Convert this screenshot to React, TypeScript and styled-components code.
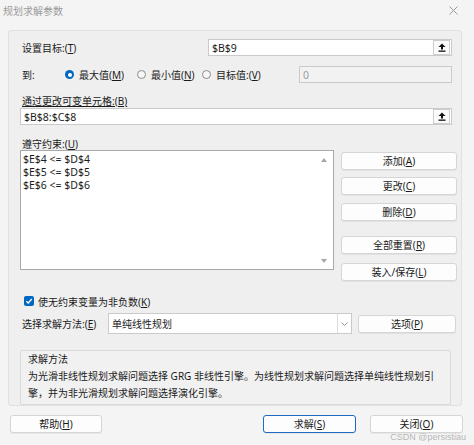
import React from 'react';
import styled, { createGlobalStyle } from 'styled-components';

const Global = createGlobalStyle`
  html, body { margin: 0; padding: 0; background: #f4f4f4; }
  body {
    font-family: "Noto Sans", "Noto Sans CJK SC", sans-serif;
    font-size: 10px;
    color: #1b1b1b;
  }
  * { box-sizing: border-box; }
`;

const Window = styled.div`
  position: relative;
  width: 474px;
  height: 445px;
  background: #f4f4f4;
  overflow: hidden;
`;

const TitleBar = styled.div`
  height: 21px;
  display: flex;
  align-items: center;
  justify-content: space-between;
  padding: 0 16px 0 3px;
  color: #9a9a9a;
  font-size: 10px;
`;

const Panel = styled.div`
  margin: 9px 0 0 8px;
  width: 454px;
  height: 376px;
  border: 1px solid #e1e1e1;
  border-radius: 3px;
  background: #efefef;
  padding-left: 11px;
  display: flex;
  flex-direction: column;
`;

const Row = styled.div<{ $mt: number; $h: number }>`
  display: flex;
  align-items: center;
  margin-top: ${p => p.$mt}px;
  height: ${p => p.$h}px;
`;

const Label = styled.span<{ $w?: number }>`
  flex: none;
  width: ${p => (p.$w ? `${p.$w}px` : 'auto')};
  padding-left: 2px;
  line-height: 12px;
  white-space: nowrap;
`;

const Caption = styled.div<{ $mt: number; $under?: boolean }>`
  margin-top: ${p => p.$mt}px;
  height: 12px;
  line-height: 12px;
  padding-left: 2px;
  white-space: nowrap;
  text-decoration: ${p => (p.$under ? 'underline' : 'none')};
`;

const Key = styled.span`
  text-decoration: underline;
`;

const Field = styled.div<{ $w: number; $disabled?: boolean; $mt?: number }>`
  flex: none;
  width: ${p => p.$w}px;
  height: 17px;
  margin-top: ${p => p.$mt ?? 0}px;
  display: flex;
  align-items: center;
  padding: 0 1px 0 3px;
  background: ${p => (p.$disabled ? '#f2f2f2' : '#ffffff')};
  border: 1px solid #cacaca;
  color: ${p => (p.$disabled ? '#9c9c9c' : '#1b1b1b')};
  font-size: 10.5px;
  white-space: nowrap;
`;

const PickButton = styled.div`
  margin-left: auto;
  width: 17px;
  height: 15px;
  border: 1px solid #cdcdcd;
  background: #fbfbfb;
  display: flex;
  align-items: center;
  justify-content: center;
`;

const RadioItem = styled.label<{ $w: number }>`
  flex: none;
  width: ${p => p.$w}px;
  display: flex;
  align-items: center;
  gap: 5px;
  white-space: nowrap;
`;

const RadioDot = styled.span<{ $on?: boolean }>`
  flex: none;
  width: 9px;
  height: 9px;
  border-radius: 50%;
  border: ${p => (p.$on ? 'none' : '1px solid #8a8a8a')};
  background: ${p => (p.$on ? '#0067c0' : '#f7f7f7')};
  display: flex;
  align-items: center;
  justify-content: center;
  &::after {
    content: '';
    display: ${p => (p.$on ? 'block' : 'none')};
    width: 4px;
    height: 4px;
    border-radius: 50%;
    background: #ffffff;
  }
`;

const ConstraintArea = styled.div`
  display: flex;
  gap: 7px;
`;

const ListBox = styled.div`
  position: relative;
  width: 314px;
  height: 120px;
  background: #ffffff;
  border: 1px solid #a9a9a9;
  padding: 2px 0 0 2px;
  line-height: 13px;
  font-size: 10.5px;
`;

const ScrollArrow = styled.span<{ $down?: boolean }>`
  position: absolute;
  right: 6px;
  ${p => (p.$down ? 'bottom: 6px;' : 'top: 7px;')}
  width: 0;
  height: 0;
  border-left: 3px solid transparent;
  border-right: 3px solid transparent;
  ${p => (p.$down ? 'border-top: 4px solid #a6a6a6;' : 'border-bottom: 4px solid #a6a6a6;')}
`;

const ButtonColumn = styled.div`
  display: flex;
  flex-direction: column;
  padding-top: 2px;
`;

const Btn = styled.button<{ $w: number; $mt?: number; $ml?: number; $primary?: boolean }>`
  flex: none;
  width: ${p => p.$w}px;
  height: 18px;
  margin-top: ${p => p.$mt ?? 0}px;
  margin-left: ${p => p.$ml ?? 0}px;
  padding: 0;
  font: inherit;
  color: #1b1b1b;
  background: #fdfdfd;
  border: 1px solid ${p => (p.$primary ? '#1a6cc0' : '#d6d6d6')};
  border-radius: 3px;
  box-shadow: 0 1px 0 rgba(0, 0, 0, 0.05);
  display: flex;
  align-items: center;
  justify-content: center;
  line-height: 12px;
  white-space: pre;
`;

const CheckRow = styled.div`
  display: flex;
  align-items: center;
  gap: 4px;
  margin-top: 14px;
  height: 12px;
  padding-left: 4px;
`;

const CheckBox = styled.span`
  flex: none;
  width: 10px;
  height: 10px;
  border-radius: 2px;
  background: #0067c0;
  display: flex;
  align-items: center;
  justify-content: center;
`;

const Select = styled.div`
  flex: none;
  width: 244px;
  height: 21px;
  display: flex;
  align-items: stretch;
  background: #ffffff;
  border: 1px solid #cacaca;
`;

const SelectText = styled.span`
  flex: 1;
  display: flex;
  align-items: center;
  padding-left: 3px;
`;

const SelectArrow = styled.span`
  width: 14px;
  border-left: 1px solid #dcdcdc;
  display: flex;
  align-items: center;
  justify-content: center;
`;

const Group = styled.div`
  margin-top: 16px;
  width: 431px;
  height: 57px;
  border: 1px solid #dadada;
  border-radius: 2px;
  background: #f1f1f1;
  padding: 0 7px;
  line-height: 17px;
`;

const Footer = styled.div`
  display: flex;
  margin-top: 9px;
  padding-left: 10px;
`;

const Watermark = styled.span`
  position: absolute;
  right: 8px;
  bottom: 3px;
  font-family: "Liberation Sans", sans-serif;
  font-size: 9px;
  color: #b3b3b3;
  text-shadow: 0 0 1px #ffffff;
`;

const UploadIcon = () => (
  <svg width="8" height="9" viewBox="0 0 8 9">
    <path d="M4 0.5 L7.5 4 H5 V6.5 H3 V4 H0.5 Z" fill="#111" />
    <rect x="0.5" y="7.5" width="7" height="1.3" fill="#111" />
  </svg>
);

const CloseIcon = () => (
  <svg width="9" height="9" viewBox="0 0 9 9">
    <path d="M0.5 0.5 L8.5 8.5 M8.5 0.5 L0.5 8.5" stroke="#9a9a9a" strokeWidth="1" />
  </svg>
);

const CheckMark = () => (
  <svg width="8" height="8" viewBox="0 0 8 8">
    <path d="M1.3 4.2 L3.2 6 L6.8 2" stroke="#fff" strokeWidth="1.3" fill="none" />
  </svg>
);

const Chevron = () => (
  <svg width="7" height="4" viewBox="0 0 7 4">
    <path d="M0.5 0.5 L3.5 3.5 L6.5 0.5" stroke="#8a8a8a" strokeWidth="0.9" fill="none" />
  </svg>
);

const constraints = ['$E$4 <= $D$4', '$E$5 <= $D$5', '$E$6 <= $D$6'];

export default function App() {
  return (
    <Window>
      <Global />
      <TitleBar>
        <span>规划求解参数</span>
        <CloseIcon />
      </TitleBar>
      <Panel>
        <Row $mt={8} $h={17}>
          <Label $w={188}>设置目标:(<Key>T</Key>)</Label>
          <Field $w={244}>
            $B$9
            <PickButton><UploadIcon /></PickButton>
          </Field>
        </Row>

        <Row $mt={10} $h={17}>
          <Label $w={45}>到:</Label>
          <RadioItem $w={72}>
            <RadioDot $on />
            <span>最大值(<Key>M</Key>)</span>
          </RadioItem>
          <RadioItem $w={65}>
            <RadioDot />
            <span>最小值(<Key>N</Key>)</span>
          </RadioItem>
          <RadioItem $w={97}>
            <RadioDot />
            <span>目标值:(<Key>V</Key>)</span>
          </RadioItem>
          <Field $w={153} $disabled>0</Field>
        </Row>

        <Caption $mt={12} $under>通过更改可变单元格:(B)</Caption>
        <Field $w={432} $mt={1}>
          $B$8:$C$8
          <PickButton><UploadIcon /></PickButton>
        </Field>

        <Caption $mt={13}>遵守约束:(<Key>U</Key>)</Caption>
        <ConstraintArea>
          <ListBox>
            {constraints.map(c => (
              <div key={c}>{c}</div>
            ))}
            <ScrollArrow />
            <ScrollArrow $down />
          </ListBox>
          <ButtonColumn>
            <Btn $w={116}><span>添加(<Key>A</Key>)</span></Btn>
            <Btn $w={116} $mt={7}><span>更改(<Key>C</Key>)</span></Btn>
            <Btn $w={116} $mt={8}><span>删除(<Key>D</Key>)</span></Btn>
            <Btn $w={116} $mt={15}><span>全部重置(<Key>R</Key>)</span></Btn>
            <Btn $w={116} $mt={9}><span>装入/保存(<Key>L</Key>)</span></Btn>
          </ButtonColumn>
        </ConstraintArea>

        <CheckRow>
          <CheckBox><CheckMark /></CheckBox>
          <span>使无约束变量为非负数(<Key>K</Key>)</span>
        </CheckRow>

        <Row $mt={6} $h={21}>
          <Label $w={88}>选择求解方法:(<Key>E</Key>)</Label>
          <Select>
            <SelectText>单纯线性规划</SelectText>
            <SelectArrow><Chevron /></SelectArrow>
          </Select>
          <Btn $w={98} $ml={6}><span>选项(<Key>P</Key>)</span></Btn>
        </Row>

        <Group>
          <div>求解方法</div>
          <div>为光滑非线性规划求解问题选择 GRG 非线性引擎。为线性规划求解问题选择单纯线性规划引</div>
          <div>擎，并为非光滑规划求解问题选择演化引擎。</div>
        </Group>
      </Panel>

      <Footer>
        <Btn $w={92}><span>帮助(<Key>H</Key>)</span></Btn>
        <Btn $w={93} $ml={161} $primary><span>求解(<Key>S</Key>)</span></Btn>
        <Btn $w={93} $ml={14}><span>关闭(<Key>O</Key>)</span></Btn>
      </Footer>
      <Watermark>CSDN @persistiau</Watermark>
    </Window>
  );
}
